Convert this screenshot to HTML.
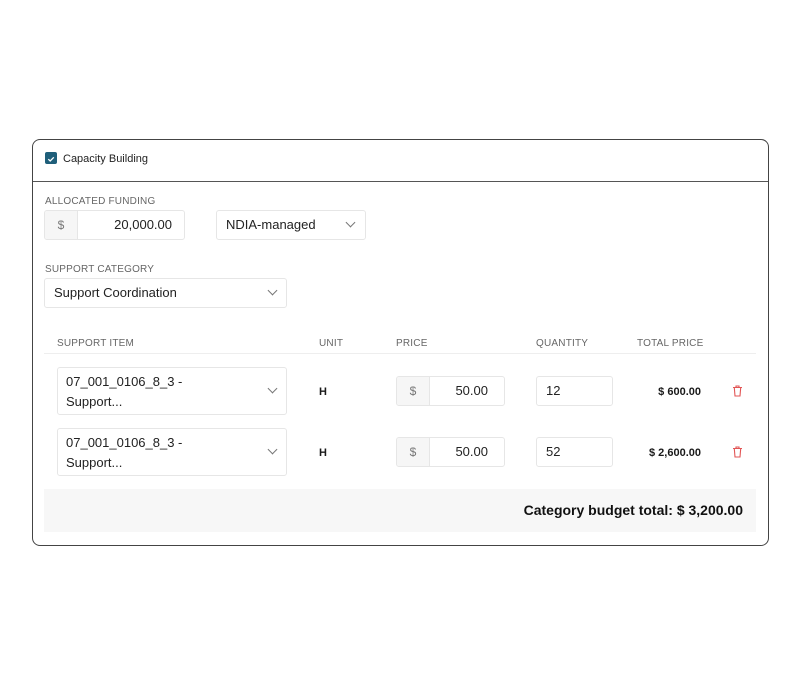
<!DOCTYPE html>
<html><head><style>
*{box-sizing:border-box;margin:0;padding:0}
body{width:800px;height:699px;background:#fff;font-family:"Liberation Sans",sans-serif;position:relative;overflow:hidden;color:#1a1a1a}
.a{position:absolute}
.card{left:32px;top:139px;width:737px;height:407px;border:1.3px solid #444;border-radius:8px}
.hline{left:33px;top:181px;width:735px;height:1.3px;background:#555}
.lbl{font-size:10px;color:#666;letter-spacing:.2px}
.box{border:1px solid #e6e6e6;border-radius:3px;background:#fff}
.pre{background:#f6f6f6;border-right:1px solid #e6e6e6;color:#777;font-size:12px;display:flex;align-items:center;justify-content:center}
.txt{font-size:13px;color:#222}
.chev{position:absolute;width:7px;height:7px;border-right:1px solid #777;border-bottom:1px solid #777;transform:rotate(45deg)}
</style></head><body>
<div class="a card"></div>
<div class="a hline"></div>
<div class="a" style="left:45px;top:152px;width:12px;height:12px;background:#1f5f7a;border-radius:2px"><svg width="12" height="12"><path d="M3.3 6.2L5.2 8 8.8 4.3" stroke="#fff" stroke-width="1.3" fill="none"/></svg></div>
<div class="a" style="left:63px;top:153px;font-size:11px;color:#222">Capacity Building</div>

<div class="a lbl" style="left:45px;top:196px">ALLOCATED FUNDING</div>
<div class="a box" style="left:44px;top:210px;width:141px;height:30px;overflow:hidden">
 <div class="a pre" style="left:0;top:0;width:33px;height:28px">$</div>
 <div class="a txt" style="right:12px;top:6px">20,000.00</div></div>
<div class="a box" style="left:216px;top:210px;width:150px;height:30px">
 <div class="a txt" style="left:9px;top:6px">NDIA-managed</div><div class="chev" style="left:130px;top:8px"></div></div>

<div class="a lbl" style="left:45px;top:264px">SUPPORT CATEGORY</div>
<div class="a box" style="left:44px;top:278px;width:243px;height:30px">
 <div class="a txt" style="left:9px;top:6px">Support Coordination</div><div class="chev" style="left:224px;top:8px"></div></div>

<div class="a lbl" style="left:57px;top:338px">SUPPORT ITEM</div>
<div class="a lbl" style="left:319px;top:338px">UNIT</div>
<div class="a lbl" style="left:396px;top:338px">PRICE</div>
<div class="a lbl" style="left:536px;top:338px">QUANTITY</div>
<div class="a lbl" style="left:637px;top:338px">TOTAL PRICE</div>
<div class="a" style="left:44px;top:353px;width:712px;height:1px;background:#eee"></div>

<!-- row1 -->
<div class="a box" style="left:57px;top:367px;width:230px;height:48px">
 <div class="a txt" style="left:8px;top:4px;line-height:20px">07_001_0106_8_3 -<br>Support...</div><div class="chev" style="left:211px;top:17px"></div></div>
<div class="a" style="left:319px;top:386px;font-size:11px;font-weight:bold">H</div>
<div class="a box" style="left:396px;top:376px;width:109px;height:30px;overflow:hidden">
 <div class="a pre" style="left:0;top:0;width:33px;height:28px">$</div>
 <div class="a txt" style="right:16px;top:6px">50.00</div></div>
<div class="a box" style="left:536px;top:376px;width:77px;height:30px"><div class="a txt" style="left:9px;top:6px">12</div></div>
<div class="a" style="right:99px;top:386px;font-size:11px;font-weight:bold">$ 600.00</div>
<svg class="a" style="left:732px;top:385px" width="11" height="12"><path d="M1 2.5H10M4 2.5V1H7V2.5M2.3 2.5L3 11H8L8.7 2.5" stroke="#e25555" stroke-width="1.1" fill="none"/></svg>

<!-- row2 -->
<div class="a box" style="left:57px;top:428px;width:230px;height:48px">
 <div class="a txt" style="left:8px;top:4px;line-height:20px">07_001_0106_8_3 -<br>Support...</div><div class="chev" style="left:211px;top:17px"></div></div>
<div class="a" style="left:319px;top:447px;font-size:11px;font-weight:bold">H</div>
<div class="a box" style="left:396px;top:437px;width:109px;height:30px;overflow:hidden">
 <div class="a pre" style="left:0;top:0;width:33px;height:28px">$</div>
 <div class="a txt" style="right:16px;top:6px">50.00</div></div>
<div class="a box" style="left:536px;top:437px;width:77px;height:30px"><div class="a txt" style="left:9px;top:6px">52</div></div>
<div class="a" style="right:99px;top:447px;font-size:11px;font-weight:bold">$ 2,600.00</div>
<svg class="a" style="left:732px;top:446px" width="11" height="12"><path d="M1 2.5H10M4 2.5V1H7V2.5M2.3 2.5L3 11H8L8.7 2.5" stroke="#e25555" stroke-width="1.1" fill="none"/></svg>

<div class="a" style="left:44px;top:489px;width:712px;height:43px;background:#f7f7f7"></div>
<div class="a" style="right:57px;top:502px;font-size:14px;font-weight:bold;color:#111">Category budget total: $ 3,200.00</div>
</body></html>
